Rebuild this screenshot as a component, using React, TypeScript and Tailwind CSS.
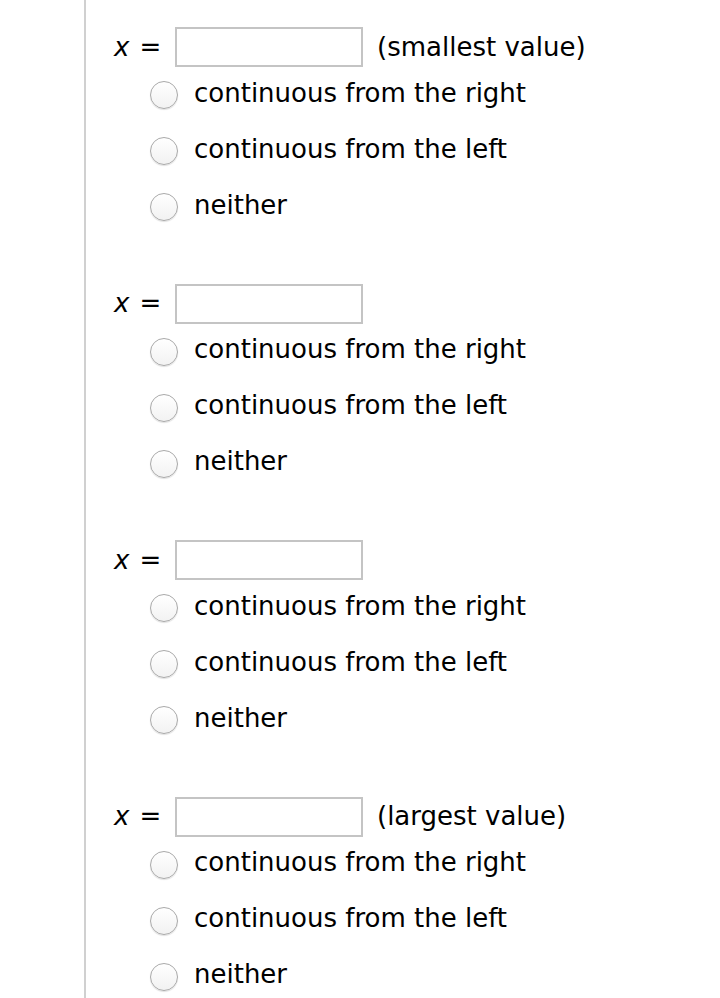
import React from 'react';

const groups = [
  { note: '(smallest value)' },
  { note: '' },
  { note: '' },
  { note: '(largest value)' },
];

const options = ['continuous from the right', 'continuous from the left', 'neither'];

function Radio() {
  return (
    <span className="w-[28px] h-[28px] rounded-full border-[1.5px] border-[#a9a9a9] bg-gradient-to-b from-white to-[#f2f2f2] shadow-[0_1px_1px_rgba(0,0,0,0.12)] shrink-0" />
  );
}

export default function App() {
  return (
    <div
      className="w-[720px] h-[998px] bg-white text-black text-[26px] overflow-hidden"
      style={{ fontFamily: '"DejaVu Sans", Verdana, sans-serif' }}
    >
      <div className="ml-[84px] h-full border-l-2 border-[#d0d0d0] pt-[27px] flex flex-col gap-[48.5px]">
        {groups.map((g, i) => (
          <div key={i} className="flex flex-col">
            <div className="flex items-center h-[40px]">
              <span className="ml-[28px] w-[61px] flex items-center">
                <i className="mr-[10px]">x</i>
                <span>=</span>
              </span>
              <div className="w-[188px] h-[40px] border-2 border-[#c4c4c4] bg-white" />
              {g.note && <span className="ml-[14px]">{g.note}</span>}
            </div>
            {options.map((o) => (
              <div key={o} className="flex items-center h-[56px] pl-[64px]">
                <Radio />
                <span className="ml-[16px] -mt-[4px]">{o}</span>
              </div>
            ))}
          </div>
        ))}
      </div>
    </div>
  );
}
